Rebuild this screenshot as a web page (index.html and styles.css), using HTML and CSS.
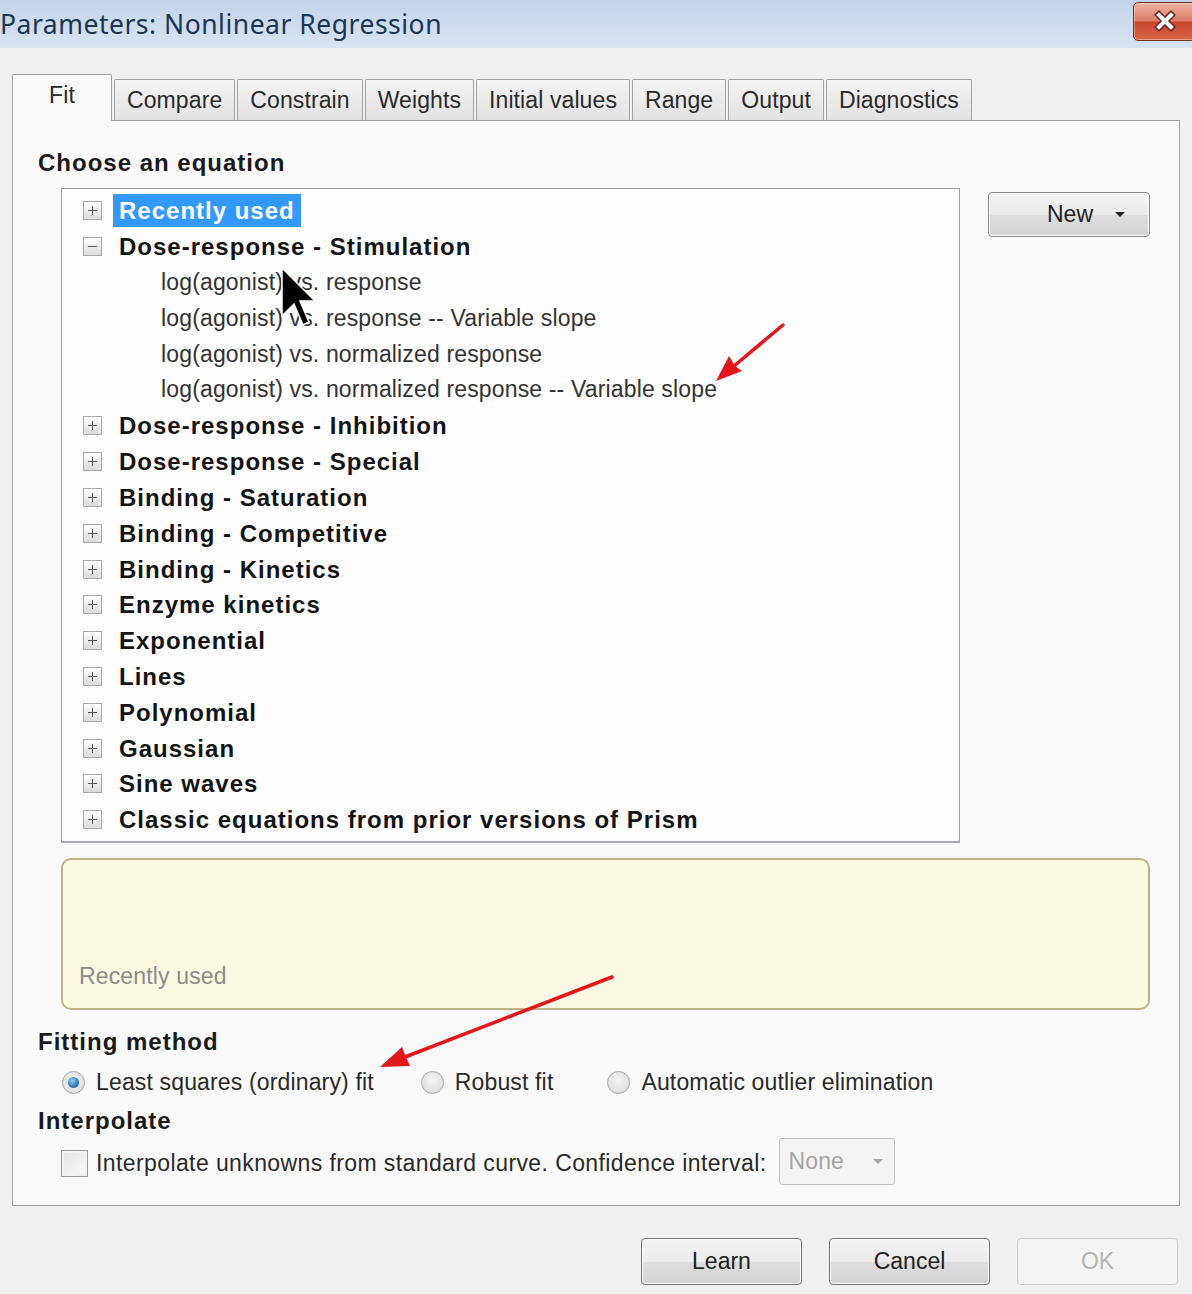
FILE: index.html
```html
<!DOCTYPE html>
<html>
<head>
<meta charset="utf-8">
<title>Parameters: Nonlinear Regression</title>
<link rel="stylesheet" href="styles.css">
</head>
<body>
<div class="titlebar">
  <span class="title">Parameters: Nonlinear Regression</span>
  <div class="close">
    <svg width="30" height="22" viewBox="0 0 30 22">
      <path d="M9 5 L21 17 M21 5 L9 17" stroke="#6a2a20" stroke-width="7" stroke-linecap="square"/>
      <path d="M9 5 L21 17 M21 5 L9 17" stroke="#ffffff" stroke-width="4" stroke-linecap="square"/>
    </svg>
  </div>
</div>
<div class="main">
  <div class="tabs">
    <div class="tab active">Fit</div>
    <div class="tab">Compare</div>
    <div class="tab">Constrain</div>
    <div class="tab">Weights</div>
    <div class="tab">Initial values</div>
    <div class="tab">Range</div>
    <div class="tab">Output</div>
    <div class="tab">Diagnostics</div>
  </div>
  <div class="panel">
    <div class="section-title">Choose an equation</div>
    <div class="eq-area">
      <div class="tree">
        <div class="row"><span class="exp plus"></span><span class="label selected">Recently used</span></div>
        <div class="row"><span class="exp minus"></span><span class="label">Dose-response - Stimulation</span></div>
        <div class="row child">log(agonist) vs. response</div>
        <div class="row child">log(agonist) vs. response -- Variable slope</div>
        <div class="row child">log(agonist) vs. normalized response</div>
        <div class="row child">log(agonist) vs. normalized response -- Variable slope</div>
        <div class="row"><span class="exp plus"></span><span class="label">Dose-response - Inhibition</span></div>
        <div class="row"><span class="exp plus"></span><span class="label">Dose-response - Special</span></div>
        <div class="row"><span class="exp plus"></span><span class="label">Binding - Saturation</span></div>
        <div class="row"><span class="exp plus"></span><span class="label">Binding - Competitive</span></div>
        <div class="row"><span class="exp plus"></span><span class="label">Binding - Kinetics</span></div>
        <div class="row"><span class="exp plus"></span><span class="label">Enzyme kinetics</span></div>
        <div class="row"><span class="exp plus"></span><span class="label">Exponential</span></div>
        <div class="row"><span class="exp plus"></span><span class="label">Lines</span></div>
        <div class="row"><span class="exp plus"></span><span class="label">Polynomial</span></div>
        <div class="row"><span class="exp plus"></span><span class="label">Gaussian</span></div>
        <div class="row"><span class="exp plus"></span><span class="label">Sine waves</span></div>
        <div class="row"><span class="exp plus"></span><span class="label">Classic equations from prior versions of Prism</span></div>
      </div>
      <div class="btn new-btn"><span>New</span><span class="caret"></span></div>
    </div>
    <div class="desc"><span>Recently used</span></div>
    <div class="section-title fit-title">Fitting method</div>
    <div class="radios">
      <div class="opt"><span class="radio checked"></span><span>Least squares (ordinary) fit</span></div>
      <div class="opt"><span class="radio"></span><span>Robust fit</span></div>
      <div class="opt"><span class="radio"></span><span>Automatic outlier elimination</span></div>
    </div>
    <div class="section-title interp-title">Interpolate</div>
    <div class="interp">
      <span class="checkbox"></span>
      <span class="interp-text">Interpolate unknowns from standard curve. Confidence interval:</span>
      <div class="select"><span>None</span><span class="caret light"></span></div>
    </div>
  </div>
  <div class="footer">
    <div class="btn">Learn</div>
    <div class="btn">Cancel</div>
    <div class="btn disabled">OK</div>
  </div>
</div>
<svg class="overlay" width="1192" height="1294" viewBox="0 0 1192 1294">
  <line x1="783" y1="325" x2="734" y2="366" stroke="#e3161e" stroke-width="3.5" stroke-linecap="round"/>
  <polygon points="716,381 729,356 735,366 742,371" fill="#e3161e"/>
  <line x1="612" y1="977" x2="405" y2="1057" stroke="#e3161e" stroke-width="3.5" stroke-linecap="round"/>
  <polygon points="380,1067 402,1047 406,1057 410,1066" fill="#e3161e"/>
  <g transform="translate(282,268)">
    <path d="M0 0 L0 48 L12 36 L21 57 L27 54 L18 33 L33 33 Z" fill="#000" stroke="#fff" stroke-width="1.5" stroke-linejoin="miter"/>
  </g>
</svg>
</body>
</html>
```
FILE: styles.css
```css
* { box-sizing: border-box; }
html, body { margin: 0; padding: 0; }
body {
  width: 1192px;
  height: 1294px;
  overflow: hidden;
  position: relative;
  background: #f0f0f0;
  font-family: "Liberation Sans", Arial, sans-serif;
  font-size: 23px;
  letter-spacing: 0.15px;
  color: #2a2a2a;
}
.titlebar {
  height: 48px;
  display: flex;
  align-items: center;
  overflow: hidden;
  background: linear-gradient(#c3d4e9, #d7e3f1);
  border-bottom: 1px solid #d9e2ec;
}
.title {
  font-family: "Noto Sans", "Open Sans", sans-serif;
  font-size: 26.5px;
  letter-spacing: 0.5px;
  color: #1c3552;
  margin-left: 0;
  white-space: nowrap;
}
.close {
  margin-left: auto;
  margin-right: -4px;
  width: 63px;
  height: 39px;
  margin-top: -5px;
  border: 1px solid #6b3128;
  border-radius: 5px;
  background: linear-gradient(#eab3a2 0%, #dc7c63 48%, #c8432b 52%, #d9694c 100%);
  display: flex;
  align-items: center;
  justify-content: center;
  box-shadow: inset 0 0 0 1px rgba(255,255,255,0.35);
}
.main {
  padding: 26px 12px 0 12px;
}
.tabs {
  display: flex;
  align-items: flex-end;
  height: 47px;
  position: relative;
  z-index: 1;
  margin-bottom: -1px;
}
.tab {
  height: 41px;
  margin-bottom: 1px;
  margin-left: 2px;
  padding: 0 12px;
  display: flex;
  align-items: center;
  border: 1px solid #a3a3a3;
  border-bottom: none;
  border-radius: 2px 2px 0 0;
  background: linear-gradient(#f5f5f5, #e1e1e1);
  color: #2a2a2a;
  letter-spacing: 0.1px;
  white-space: nowrap;
}
.tab.active {
  height: 47px;
  margin-bottom: 0;
  margin-left: 0;
  width: 100px;
  justify-content: center;
  padding-bottom: 6px;
  background: #f9f9f9;
}
.panel {
  border: 1px solid #a2a2a2;
  background: #f9f9f9;
  padding: 27px 0 20px 25px;
}
.section-title {
  font-weight: bold;
  font-size: 24px;
  letter-spacing: 1px;
  line-height: 30px;
  height: 30px;
  color: #1a1a1a;
}
.eq-area {
  display: flex;
  align-items: flex-start;
  margin-top: 10px;
  margin-left: 23px;
}
.tree {
  width: 899px;
  height: 655px;
  border: 1px solid #a0a0a0;
  border-bottom: 2px solid #a6a6b8;
  background: #fdfdfd;
  padding-top: 4px;
}
.row {
  height: 35.82px;
  display: flex;
  align-items: center;
  white-space: nowrap;
}
.exp {
  width: 19px;
  height: 19px;
  margin-left: 21px;
  border: 1px solid #a9a9a9;
  background: linear-gradient(#ffffff, #dcdcdc);
  position: relative;
  flex: none;
}
.exp::before {
  content: "";
  position: absolute;
  left: 4px;
  right: 4px;
  top: 8px;
  height: 1px;
  background: #555;
}
.exp.plus::after {
  content: "";
  position: absolute;
  top: 4px;
  bottom: 4px;
  left: 8px;
  width: 1px;
  background: #555;
}
.label {
  margin-left: 11px;
  padding: 0 6px;
  height: 33px;
  line-height: 33px;
  font-weight: bold;
  font-size: 24px;
  letter-spacing: 1px;
  color: #141414;
}
.label.selected {
  background: #3399ff;
  color: #ffffff;
}
.row.child {
  padding-left: 99px;
  color: #333;
  letter-spacing: 0.15px;
}
.btn {
  width: 161px;
  height: 47px;
  border: 1px solid #747474;
  border-radius: 4px;
  background: linear-gradient(#f4f4f4 0%, #ebebeb 50%, #dddddd 51%, #d4d4d4 100%);
  box-shadow: inset 0 0 0 1px #fbfbfb;
  display: flex;
  align-items: center;
  justify-content: center;
  color: #222;
  letter-spacing: 0;
}
.new-btn {
  width: 162px;
  height: 45px;
  margin-left: 28px;
  margin-top: 4px;
  justify-content: flex-end;
  padding-right: 24px;
  border-color: #8a8a8a;
}
.new-btn .caret {
  margin-left: 22px;
}
.caret {
  width: 0;
  height: 0;
  border-left: 5px solid transparent;
  border-right: 5px solid transparent;
  border-top: 5px solid #222;
}
.caret.light {
  border-top-color: #a8a8a8;
  margin-left: 29px;
}
.desc {
  margin-top: 15px;
  margin-left: 23px;
  width: 1089px;
  height: 152px;
  border: 2px solid #bcb488;
  border-radius: 10px;
  background: #fbf9e2;
  display: flex;
  align-items: flex-end;
  padding: 0 0 17px 16px;
  line-height: 30px;
  color: #8c8c8c;
}
.fit-title { margin-top: 17px; }
.radios {
  display: flex;
  align-items: center;
  height: 30px;
  margin-top: 10px;
  padding-left: 24px;
}
.opt {
  display: flex;
  align-items: center;
  margin-right: 47px;
  white-space: nowrap;
}
.opt + .opt {
  margin-right: 54px;
}
.radio {
  width: 23px;
  height: 23px;
  border-radius: 50%;
  border: 1px solid #a9a9a9;
  background: radial-gradient(circle at 50% 40%, #f6f6f6, #d6d6d6);
  margin-right: 11px;
  position: relative;
  flex: none;
}
.radio.checked::after {
  content: "";
  position: absolute;
  left: 5px;
  top: 5px;
  width: 11px;
  height: 11px;
  border-radius: 50%;
  background: radial-gradient(circle at 40% 35%, #8fd0f5, #2a7bb7 60%, #1b5d94);
}
.interp-title { margin-top: 9px; }
.interp {
  display: flex;
  align-items: center;
  height: 47px;
  margin-top: 2px;
  padding-left: 23px;
  white-space: nowrap;
}
.interp-text {
  letter-spacing: 0.4px;
  padding-top: 3px;
}
.checkbox {
  width: 27px;
  height: 27px;
  border: 1px solid #9a9a9a;
  background: linear-gradient(135deg, #e4e4e4, #fafafa);
  box-shadow: inset 0 0 0 2px #f2f2f2;
  margin-right: 8px;
  margin-top: 3px;
  flex: none;
}
.select {
  width: 116px;
  height: 47px;
  margin-left: 13px;
  border: 1px solid #c2c2c2;
  border-radius: 3px;
  background: #f4f4f4;
  display: flex;
  align-items: center;
  padding-left: 8px;
  color: #a4a4a4;
}
.footer {
  display: flex;
  justify-content: flex-end;
  gap: 27px;
  margin-top: 32px;
  padding-right: 2px;
}
.btn.disabled {
  border-color: #cdcdcd;
  background: #f4f4f4;
  box-shadow: none;
  color: #b4b4b4;
}
.overlay {
  position: absolute;
  left: 0;
  top: 0;
  pointer-events: none;
}
```
